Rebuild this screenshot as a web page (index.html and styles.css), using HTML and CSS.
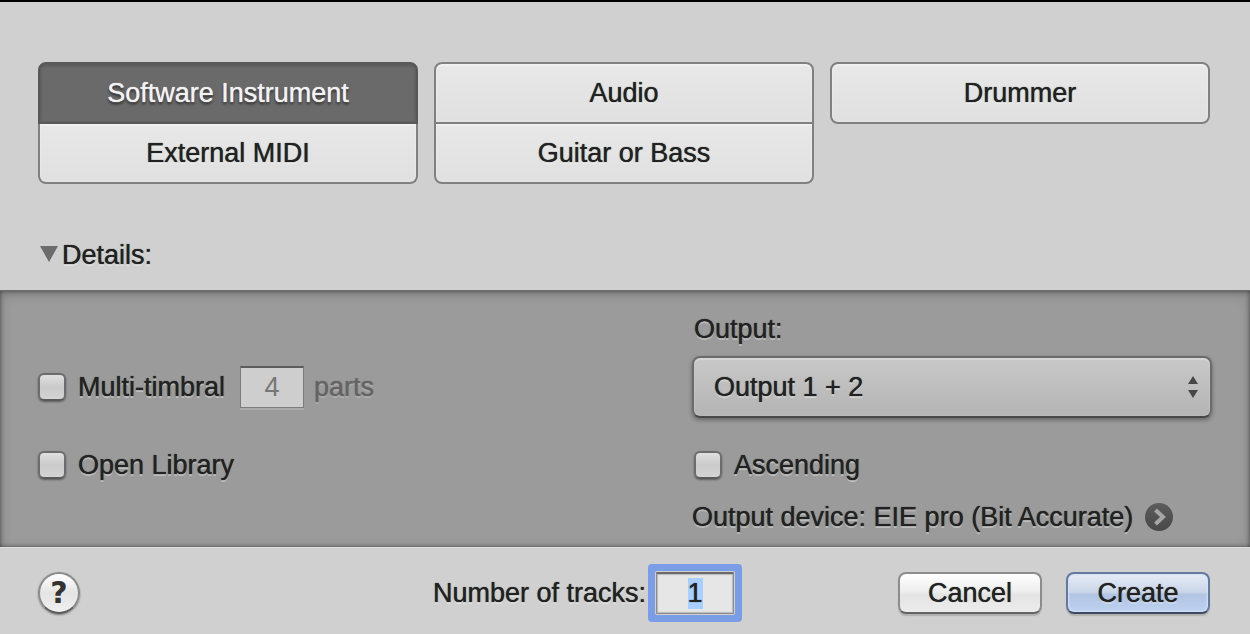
FILE: index.html
```html
<!DOCTYPE html>
<html lang="en">
  <head>
    <meta charset="UTF-8" />
    <meta name="viewport" content="width=device-width, initial-scale=1.0" />
    <title>New Tracks</title>
    <link rel="stylesheet" href="styles.css">
  </head>

  <body>
    <form class="dialog">
      <div class="trackTypes">
        <div class="group">
          <button type="button" class="type selected">Software Instrument</button>
          <button type="button" class="type">External MIDI</button>
        </div>
        <div class="group">
          <button type="button" class="type">Audio</button>
          <button type="button" class="type">Guitar or Bass</button>
        </div>
        <div class="group">
          <button type="button" class="type">Drummer</button>
        </div>
      </div>

      <details class="details" open>
        <summary class="summary">
          <svg class="triangle" width="18" height="18" viewBox="0 0 18 18"><path d="M0 0h18L9 16z" fill="#6c6c6c" /></svg>
          <span>Details:</span>
        </summary>

        <div class="panel">
          <label class="outputLabel" for="output">Output:</label>

          <div class="line multi">
            <input class="check" id="multi" type="checkbox" />
            <label for="multi">Multi-timbral</label>
            <input class="parts" id="parts" type="text" value="4" disabled />
            <label class="muted" for="parts">parts</label>
          </div>
          <div class="selectBox">
            <select class="output" id="output">
              <option>Output 1 + 2</option>
            </select>
            <svg class="arrows" width="10" height="22" viewBox="0 0 10 22">
              <path d="M5 0l5 8H0zM5 22l5-8H0z" fill="#474747" />
            </svg>
          </div>

          <div class="line">
            <input class="check" id="library" type="checkbox" />
            <label for="library">Open Library</label>
          </div>
          <div class="line ascending">
            <input class="check" id="ascending" type="checkbox" />
            <label for="ascending">Ascending</label>
          </div>

          <div class="line device">
            <span>Output device: EIE pro (Bit Accurate)</span>
            <button type="button" class="go" aria-label="Open audio preferences">
              <svg width="28" height="28" viewBox="0 0 28 28">
                <defs>
                  <linearGradient id="goFill" x1="0" y1="0" x2="0" y2="1">
                    <stop offset="0" stop-color="#5c5c5c" />
                    <stop offset="1" stop-color="#484848" />
                  </linearGradient>
                </defs>
                <circle cx="14" cy="14" r="14" fill="url(#goFill)" />
                <path d="M10.500 7l7.500 7-7.500 7" fill="none" stroke="#a6a6a6" stroke-width="4" />
              </svg>
            </button>
          </div>
        </div>
      </details>

      <div class="footer">
        <button type="button" class="help" aria-label="Help">?</button>
        <div class="tracks">
          <label for="tracks">Number of tracks:</label>
          <input class="count" id="tracks" type="text" value="1" autofocus />
        </div>
        <div class="actions">
          <button type="button" class="btn">Cancel</button>
          <button type="submit" class="btn create">Create</button>
        </div>
      </div>
    </form>

    <script>
      const tracks = document.getElementById("tracks");
      tracks.focus();
      tracks.select();
    </script>
  </body>
</html>
```
FILE: styles.css
```css
* {
  margin: 0px;
  padding: 0px;
  box-sizing: border-box;
}
body {
  min-height: 100vh;
  background-color: #d0d0d0;
  border-top: 2px solid black;
}
body,
button,
input,
select {
  font-family: "Liberation Sans", Arial, sans-serif;
  font-size: 27px;
  line-height: 30px;
  color: #222222;
  text-shadow: 0 0 1px #222222, 0 2px 0 rgba(255, 255, 255, 0.35);
}
button,
input,
select {
  appearance: none;
  outline: none;
}

.trackTypes {
  display: grid;
  grid-template-columns: repeat(3, 1fr);
  align-items: start;
  gap: 16px;
  padding: 60px 40px 56px 38px;
}
.type {
  display: block;
  width: 100%;
  height: 62px;
  border: 2px solid #808080;
  background: linear-gradient(#e8e8e8, #e0e0e0);
  box-shadow: inset 0 2px 1px #f0f0f0, inset 0 0 2px #eeeeee;
}
.type + .type {
  height: 60px;
  border-top: none;
}
.type:first-child {
  border-top-left-radius: 8px;
  border-top-right-radius: 8px;
}
.type:last-child {
  border-bottom-left-radius: 8px;
  border-bottom-right-radius: 8px;
}
.type.selected {
  color: #f2f2f2;
  border-color: #585858;
  background: #6a6a6a;
  box-shadow: inset 0 2px 3px #5a5a5a, inset 0 0 3px #5a5a5a;
  text-shadow: 0 0 1px #f2f2f2, 0 2px 3px rgba(0, 0, 0, 0.7);
}

.summary {
  display: flex;
  align-items: center;
  gap: 4px;
  padding: 0 40px 20px;
  list-style: none;
}
.panel {
  display: grid;
  grid-template-columns: 654fr 520fr;
  align-items: center;
  padding: 23px 38px 15px;
  background-color: #9b9b9b;
  border-top: 1px solid #6c6c6c;
  box-shadow: inset 0 3px 12px rgba(0, 0, 0, 0.2), inset 0 0 4px rgba(0, 0, 0, 0.5);
}
.outputLabel {
  grid-column: 2;
  padding-left: 2px;
}
.line {
  display: flex;
  align-items: center;
}
.check {
  width: 28px;
  height: 28px;
  margin-right: 12px;
  border: 2px solid #6c6c6c;
  border-bottom-color: #5a5a5a;
  border-radius: 6px;
  background: linear-gradient(#e0e0e0, #cacaca 50%, #d4d4d4);
  box-shadow: 0 1px 2px rgba(0, 0, 0, 0.4);
}
.check:checked {
  background: #555555;
}
.parts {
  width: 64px;
  height: 42px;
  margin: 0 10px 0 15px;
  border: 1px solid #7c7c7c;
  border-top: 2px solid #5c5c5c;
  background-color: #cecece;
  box-shadow: 0 2px 0 #aaaaaa;
  text-align: center;
  text-shadow: none;
  color: #777777;
}
.muted {
  color: #646464;
  text-shadow: 0 0 1px #646464, 0 2px 0 rgba(255, 255, 255, 0.2);
}
.selectBox {
  position: relative;
  margin: 12px 0 32px;
}
.multi {
  margin: 12px 0 32px;
}
.output {
  display: block;
  width: 100%;
  height: 62px;
  padding: 0 40px 0 20px;
  border: 2px solid #6b6b6b;
  border-bottom-color: #484848;
  border-radius: 8px;
  background: linear-gradient(#c8c8c8, #b4b4b4);
  box-shadow: inset 0 2px 1px #d6d6d6, inset 0 0 2px #cccccc, 0 2px 4px rgba(0, 0, 0, 0.35);
}
.arrows {
  position: absolute;
  top: 20px;
  right: 14px;
  pointer-events: none;
}
.ascending {
  padding-left: 2px;
}
.device {
  grid-column: 2;
  gap: 12px;
  margin-top: 22px;
}
.go {
  width: 28px;
  height: 28px;
  border: none;
  border-radius: 50%;
  background: none;
}
.go svg {
  display: block;
}

.footer {
  display: grid;
  grid-template-columns: 395fr 465fr 312px;
  align-items: center;
  padding: 24px 40px 20px 38px;
  border-top: 1px solid #dedede;
}
.help {
  width: 42px;
  height: 42px;
  border: 2px solid #8a8a8a;
  border-bottom-color: #5c5c5c;
  border-radius: 50%;
  background: linear-gradient(#ffffff, #e4e4e4 50%, #f0f0f0);
  box-shadow: 0 1px 2px rgba(0, 0, 0, 0.4);
  font-family: "DejaVu Sans", sans-serif;
  font-size: 30px;
  font-weight: 700;
  text-shadow: none;
  color: #333333;
}
.tracks {
  display: flex;
  align-items: center;
  gap: 10px;
  white-space: nowrap;
}
.count {
  width: 78px;
  height: 42px;
  border: 1px solid #8c8c8c;
  border-top: 2px solid #6a6a6a;
  background-color: #e6e6e6;
  box-shadow: inset 0 0 1px 1px #b8b8b8, 0 0 0 1px #d0d0d0, 0 0 0 8px #7a9de6;
  border-radius: 1px;
  text-align: center;
}
.count::selection {
  color: #222222;
  background-color: #a8cfff;
  text-shadow: 0 0 1px #222222;
}
.actions {
  display: grid;
  grid-template-columns: 1fr 1fr;
  gap: 24px;
}
.btn {
  height: 42px;
  border: 2px solid #8c8c8c;
  border-bottom-color: #646464;
  border-radius: 8px;
  background: linear-gradient(#ffffff, #eeeeee 45%, #e4e4e4 55%, #ececec);
  box-shadow: 0 2px 1px rgba(0, 0, 0, 0.15);
}
.create {
  border-color: #64799c;
  border-bottom-color: #3e4c63;
  background: linear-gradient(#e6ecf6, #c9d5e8 48%, #b1c4e3 54%, #bdd2f0);
  box-shadow: inset 0 0 2px 1px #d3e3f8, 0 2px 1px rgba(0, 0, 0, 0.15);
}
```
